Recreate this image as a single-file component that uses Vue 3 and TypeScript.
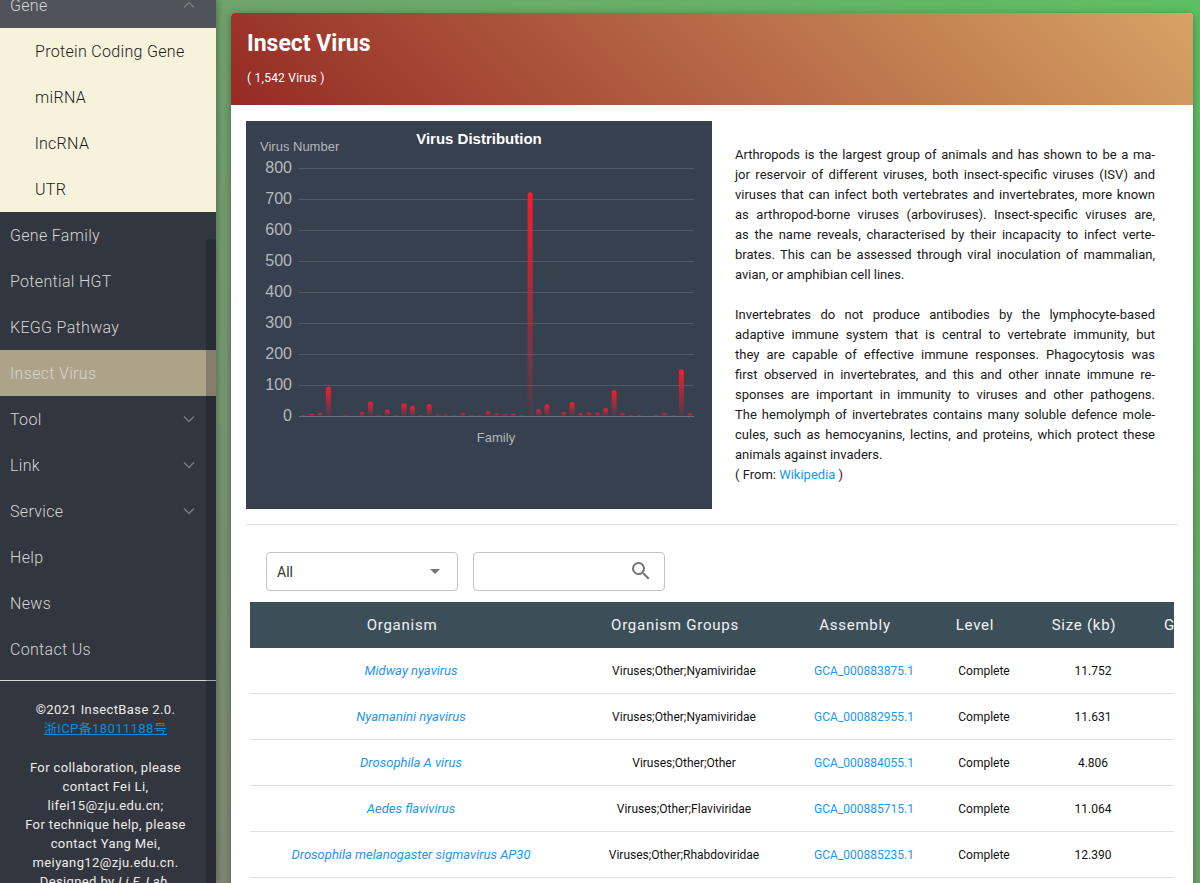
<script setup lang="ts">
import { ref } from 'vue'

interface MenuItem {
  label: string
  active?: boolean
  expandable?: boolean
}

interface VirusRow {
  organism: string
  groups: string
  assembly: string
  level: string
  size: string
}

const geneItems: string[] = ['Protein Coding Gene', 'miRNA', 'lncRNA', 'UTR']

const menuItems: MenuItem[] = [
  { label: 'Gene Family' },
  { label: 'Potential HGT' },
  { label: 'KEGG Pathway' },
  { label: 'Insect Virus', active: true },
  { label: 'Tool', expandable: true },
  { label: 'Link', expandable: true },
  { label: 'Service', expandable: true },
  { label: 'Help' },
  { label: 'News' },
  { label: 'Contact Us' },
]

// Justified copy, one entry per line
const paragraphs: string[][] = [
  [
    'Arthropods is the largest group of animals and has shown to be a ma-',
    'jor reservoir of different viruses, both insect-specific viruses (ISV) and',
    'viruses that can infect both vertebrates and invertebrates, more known',
    'as arthropod-borne viruses (arboviruses). Insect-specific viruses are,',
    'as the name reveals, characterised by their incapacity to infect verte-',
    'brates. This can be assessed through viral inoculation of mammalian,',
    'avian, or amphibian cell lines.',
  ],
  [
    'Invertebrates do not produce antibodies by the lymphocyte-based',
    'adaptive immune system that is central to vertebrate immunity, but',
    'they are capable of effective immune responses. Phagocytosis was',
    'first observed in invertebrates, and this and other innate immune re-',
    'sponses are important in immunity to viruses and other pathogens.',
    'The hemolymph of invertebrates contains many soluble defence mole-',
    'cules, such as hemocyanins, lectins, and proteins, which protect these',
    'animals against invaders.',
  ],
]

const rows: VirusRow[] = [
  { organism: 'Midway nyavirus', groups: 'Viruses;Other;Nyamiviridae', assembly: 'GCA_000883875.1', level: 'Complete', size: '11.752' },
  { organism: 'Nyamanini nyavirus', groups: 'Viruses;Other;Nyamiviridae', assembly: 'GCA_000882955.1', level: 'Complete', size: '11.631' },
  { organism: 'Drosophila A virus', groups: 'Viruses;Other;Other', assembly: 'GCA_000884055.1', level: 'Complete', size: '4.806' },
  { organism: 'Aedes flavivirus', groups: 'Viruses;Other;Flaviviridae', assembly: 'GCA_000885715.1', level: 'Complete', size: '11.064' },
  { organism: 'Drosophila melanogaster sigmavirus AP30', groups: 'Viruses;Other;Rhabdoviridae', assembly: 'GCA_000885235.1', level: 'Complete', size: '12.390' },
]

const headers: string[] = ['Organism', 'Organism Groups', 'Assembly', 'Level', 'Size (kb)']

// Virus count per family, in axis order
const counts: number[] = [
  3, 7, 10, 95, 0, 4, 0, 14, 47, 2, 21, 2, 41, 33, 3, 39, 5, 5, 2, 10, 2, 2, 15, 9,
  6, 7, 2, 722, 22, 38, 0, 14, 45, 10, 11, 11, 26, 84, 10, 3, 3, 0, 4, 10, 3, 151, 8,
]

const plot = { left: 53, right: 448, top: 47, bottom: 295, max: 800 }
const scale = (plot.bottom - plot.top) / plot.max
const step = (plot.right - plot.left) / counts.length

const ticks = Array.from({ length: 9 }, (_, i) => ({
  value: i * 100,
  y: Math.round(plot.bottom - i * 100 * scale),
}))

const bars = counts
  .map((count, i) => ({
    x: plot.left + step * (i + 0.5) - 2.5,
    y: plot.bottom - count * scale,
    height: count * scale,
  }))
  .filter((bar) => bar.height > 0)

const filter = ref('All')
const query = ref('')
</script>

<template>
  <div class="page">
    <aside class="sidebar">
      <nav class="menu">
        <button type="button" class="item parent">
          Gene
          <svg class="chevron" viewBox="0 0 12 8" aria-hidden="true"><path d="M1 6.5 6 1.5l5 5" /></svg>
        </button>
        <div class="submenu">
          <a v-for="name in geneItems" :key="name" href="#" class="item sub">{{ name }}</a>
        </div>
        <template v-for="item in menuItems" :key="item.label">
          <button v-if="item.expandable" type="button" class="item">
            {{ item.label }}
            <svg class="chevron" viewBox="0 0 12 8" aria-hidden="true"><path d="m1 1.5 5 5 5-5" /></svg>
          </button>
          <a v-else href="#" class="item" :class="{ active: item.active }">{{ item.label }}</a>
        </template>
      </nav>
      <footer class="credits">
        <p>©2021 InsectBase 2.0.<br /><a href="#">浙ICP备18011188号</a></p>
        <p>
          For collaboration, please<br />contact Fei Li,<br />lifei15@zju.edu.cn;<br />
          For technique help, please<br />contact Yang Mei,<br />meiyang12@zju.edu.cn.<br />
          Designed by <em>Li F. Lab.</em>
        </p>
      </footer>
      <div class="thumb"></div>
    </aside>

    <main class="content">
      <section class="card">
        <header class="banner">
          <h1>Insect Virus</h1>
          <p>( 1,542 Virus )</p>
        </header>

        <div class="overview">
          <div class="chart">
            <svg viewBox="0 0 466 388" role="img" aria-label="Virus Distribution">
              <defs>
                <linearGradient id="bar" x1="0" y1="0" x2="0" y2="1">
                  <stop offset="0" stop-color="#fb1b2b" />
                  <stop offset="1" stop-color="#fb1b2b" stop-opacity="0.08" />
                </linearGradient>
              </defs>
              <text class="title" x="233" y="23" text-anchor="middle">Virus Distribution</text>
              <text class="name" x="14" y="30">Virus Number</text>
              <g v-for="tick in ticks" :key="tick.value">
                <line class="grid" :class="{ base: tick.value === 0 }" :x1="plot.left" :x2="plot.right" :y1="tick.y + 0.5" :y2="tick.y + 0.5" />
                <text class="tick" x="46" :y="tick.y + 5" text-anchor="end">{{ tick.value }}</text>
              </g>
              <rect v-for="bar in bars" :key="bar.x" :x="bar.x" :y="bar.y" width="5" :height="bar.height" rx="2.5" fill="url(#bar)" />
              <text class="name" x="250" y="321" text-anchor="middle">Family</text>
            </svg>
          </div>
          <div class="about">
            <p v-for="(lines, p) in paragraphs" :key="p">
              <span v-for="line in lines" :key="line" class="line">{{ line }}</span>
              <span v-if="p === 1" class="line">( From: <a href="#">Wikipedia</a> )</span>
            </p>
          </div>
        </div>

        <div class="listing">
          <form class="filters" @submit.prevent>
            <div class="field">
              <select v-model="filter" aria-label="Filter field">
                <option>All</option>
              </select>
              <svg class="caret" viewBox="0 0 10 5" aria-hidden="true"><path d="M0 0h10L5 5z" /></svg>
            </div>
            <div class="field">
              <input v-model="query" type="text" aria-label="Search" />
              <button type="submit" class="search" aria-label="Search">
                <svg viewBox="0 0 24 24" aria-hidden="true">
                  <path d="M15.5 14h-.79l-.28-.27A6.47 6.47 0 0 0 16 9.5 6.5 6.5 0 1 0 9.5 16c1.61 0 3.09-.59 4.23-1.57l.27.28v.79l5 4.99L20.49 19zm-6 0C7.01 14 5 11.99 5 9.5S7.01 5 9.5 5 14 7.01 14 9.5 11.99 14 9.5 14" />
                </svg>
              </button>
            </div>
          </form>

          <div class="scroller">
            <table>
              <colgroup>
                <col class="c-organism" />
                <col class="c-groups" />
                <col class="c-assembly" />
                <col class="c-level" />
                <col class="c-size" />
                <col class="c-more" />
              </colgroup>
              <thead>
                <tr>
                  <th v-for="header in headers" :key="header" scope="col">{{ header }}</th>
                  <th scope="col" class="more">G</th>
                </tr>
              </thead>
              <tbody>
                <tr v-for="row in rows" :key="row.assembly">
                  <td><a href="#" class="species">{{ row.organism }}</a></td>
                  <td>{{ row.groups }}</td>
                  <td><a href="#">{{ row.assembly }}</a></td>
                  <td>{{ row.level }}</td>
                  <td>{{ row.size }}</td>
                  <td></td>
                </tr>
              </tbody>
            </table>
          </div>
        </div>
      </section>
    </main>
  </div>
</template>

<style>
body {
  margin: 0;
}
</style>

<style scoped>
.page,
.page * {
  box-sizing: border-box;
}

.page {
  display: flex;
  height: 100vh;
  overflow: hidden;
  background: linear-gradient(45deg, #838377, #5ebf62);
  color: #1a1a1a;
  font-family: Roboto, "Noto Sans CJK SC", sans-serif;
  font-size: 13px;
}

p,
h1 {
  margin: 0;
}

a {
  color: #2196f3;
  text-decoration: none;
}

button {
  border: 0;
  background: none;
  font: inherit;
  cursor: pointer;
}

.sidebar {
  position: relative;
  flex: 0 0 216px;
  overflow: hidden;
  background: #32363e;
  box-shadow: 2px 0 6px rgba(0, 0, 0, 0.25);
}

.menu {
  display: flex;
  flex-direction: column;
  margin-top: -18px;
  padding-bottom: 8px;
  border-bottom: 1px solid #d8d8d8;
}

.item {
  display: flex;
  align-items: center;
  justify-content: space-between;
  width: 100%;
  height: 46px;
  padding: 0 21px 0 10px;
  color: #d4d5d7;
  font-size: 16px;
  font-weight: 300;
  letter-spacing: 0.02em;
  text-align: left;
}

.parent {
  background: #50535a;
}

.submenu {
  background: #f7f2dc;
}

.sub {
  padding-left: 35px;
  color: #1a1a1a;
}

.active {
  background: #ada388;
}

.chevron {
  width: 12px;
  height: 8px;
  fill: none;
  stroke: #787b7f;
  stroke-width: 1.5;
}

.credits {
  display: flex;
  flex-direction: column;
  gap: 20px;
  padding: 19px 21px 0 16px;
  color: #ececec;
  line-height: 19px;
  letter-spacing: 0.03em;
  text-align: center;
  white-space: nowrap;
}

.credits a {
  color: #0d8ddb;
  text-decoration: underline;
}

.thumb {
  position: absolute;
  top: 239px;
  right: 0;
  bottom: 0;
  width: 10px;
  border-radius: 4px 4px 0 0;
  background: rgba(18, 14, 28, 0.25);
}

.content {
  flex: 1;
  min-width: 0;
  padding: 13px 7px 0 15px;
}

.card {
  height: 100%;
  min-height: 900px;
  border-radius: 4px;
  background: #fff;
  box-shadow: 0 2px 8px rgba(0, 0, 0, 0.35);
}

.banner {
  height: 92px;
  padding: 16px 16px 0;
  border-radius: 4px 4px 0 0;
  background: linear-gradient(45deg, #952a25, #d6a364);
  color: #fff;
}

.banner h1 {
  font-size: 23px;
  line-height: 30px;
  font-weight: 700;
}

.banner p {
  margin-top: 10px;
  font-size: 12px;
  line-height: 18px;
  letter-spacing: 0.02em;
}

.overview {
  display: grid;
  grid-template-columns: 1fr 1fr;
  align-items: center;
  margin: 0 15px;
  padding: 16px 0 15px;
  border-bottom: 1px solid #dedede;
}

.chart {
  background: #37404e;
}

.chart svg {
  display: block;
  width: 100%;
  font-family: "Liberation Sans", Arial, sans-serif;
}

.title {
  fill: #fff;
  font-size: 15px;
  font-weight: 700;
}

.name {
  fill: #b4b8bd;
  font-size: 13px;
}

.tick {
  fill: #b4b8bd;
  font-size: 16px;
}

.grid {
  stroke: #515a68;
}

.base {
  stroke: #6a727e;
}

.about {
  display: flex;
  flex-direction: column;
  gap: 20px;
  padding: 0 23px;
  line-height: 20px;
}

.line {
  display: block;
  text-align: justify;
  text-align-last: justify;
}

.line:last-child,
.line:nth-child(n + 7):nth-last-child(-n + 2):not(:nth-child(7)) {
  text-align-last: left;
}

.listing {
  padding: 27px 19px 0;
}

.filters {
  display: flex;
  gap: 15px;
  padding: 0 16px;
}

.field {
  position: relative;
  width: 192px;
  height: 39px;
}

.field select,
.field input {
  width: 100%;
  height: 100%;
  padding: 0 10px;
  border: 1px solid #c4c4c4;
  border-radius: 4px;
  background: #fff;
  color: #333;
  font: inherit;
  font-size: 14px;
  appearance: none;
}

.caret {
  position: absolute;
  top: 17px;
  right: 18px;
  width: 10px;
  height: 5px;
  fill: #757575;
  pointer-events: none;
}

.search {
  position: absolute;
  top: 7px;
  right: 12px;
  width: 24px;
  height: 24px;
  padding: 0;
}

.search svg {
  display: block;
  fill: #757575;
}

.scroller {
  margin-top: 11px;
  overflow: hidden;
}

table {
  width: 100%;
  min-width: 924px;
  table-layout: fixed;
  border-collapse: separate;
  border-spacing: 0;
}

.c-organism {
  width: 322px;
}

.c-groups {
  width: 224px;
}

.c-assembly {
  width: 136px;
}

.c-level {
  width: 104px;
}

.c-size {
  width: 114px;
}

th,
td {
  height: 46px;
  padding: 0;
  text-align: center;
  white-space: nowrap;
}

th {
  padding-right: 18px;
  background: #3c4f58;
  color: #f0f2f3;
  font-size: 15px;
  font-weight: 400;
  letter-spacing: 0.05em;
}

.more {
  padding: 0 0 0 14px;
  overflow: hidden;
  text-align: left;
}

td {
  border-bottom: 1px solid #e0e0e0;
  color: #111;
  font-size: 12px;
}

.species {
  font-size: 13px;
  font-style: italic;
}
</style>
